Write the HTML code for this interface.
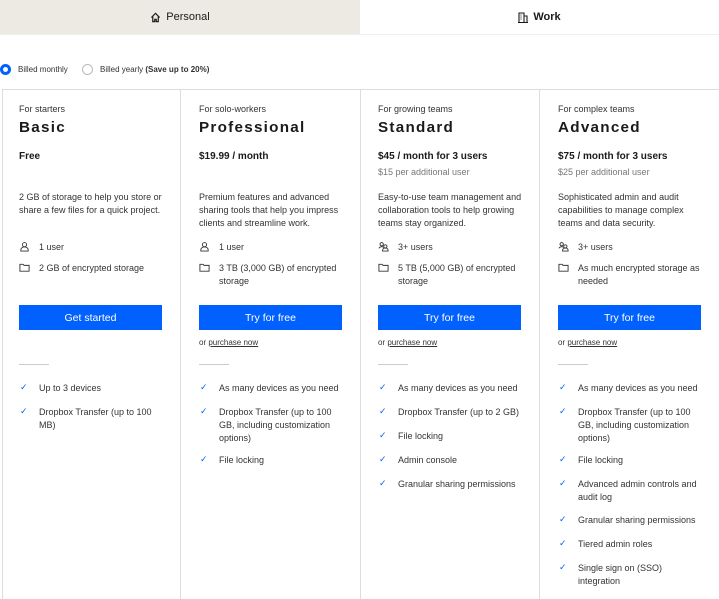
<!DOCTYPE html>
<html><head><meta charset="utf-8"><style>
*{margin:0;padding:0;box-sizing:border-box}
body{width:719px;height:590px;overflow:hidden;background:#fff;font-family:"Liberation Sans",sans-serif;color:#1e1919;position:relative}
.tab{position:absolute;top:0;height:34px;width:360px;display:flex;align-items:center;justify-content:center;font-size:11px;gap:5px}
.t1{left:0;background:#edeae3}
.t2{left:360px;background:#fff;font-weight:bold;width:359px}
.radio{position:absolute;top:64px;width:11px;height:11px;border-radius:50%}
.rl{position:absolute;top:65px;font-size:8px;color:#333}
.tbl{position:absolute;left:2px;top:89px;width:717px;height:510px;border-top:1px solid #ddd;border-left:1px solid #ddd}
.col{position:absolute;top:89px;height:510px;border-right:1px solid #ddd}
.a{position:absolute;font-size:9px;line-height:13px;color:#333}
.h{position:absolute;font-size:14.5px;letter-spacing:1.2px;color:#1e1919;font-weight:bold;transform:scaleX(1.05);transform-origin:left}
.p{position:absolute;font-size:10px;font-weight:bold}
.btn{position:absolute;width:143px;height:25px;background:#0061fe;color:#fff;font-size:10.5px;display:flex;align-items:center;justify-content:center}
.dv{position:absolute;width:30px;border-top:1px solid #ccc}
.ck{position:absolute;color:#0061fe;font-size:9px}
svg.i{position:absolute}
u{text-decoration:underline}
</style></head><body>
<div class="tab t1"><svg width="11" height="11" viewBox="0 0 12 12"><path d="M1.5 6L6 1.5 10.5 6M3 5v5.5h2.2V8h1.6v2.5H9V5" fill="none" stroke="#1e1919" stroke-width="1.3"/></svg>Personal</div>
<div class="tab t2"><svg width="10" height="11" viewBox="0 0 10 11"><path d="M1 10.5V1h5v9.5M6 4h3v6.5M0 10.5h10M2.5 3h1M2.5 5h1M2.5 7h1" fill="none" stroke="#1e1919" stroke-width="1.1"/></svg>Work</div>
<div style="position:absolute;left:0;right:0;top:34px;border-top:1px solid #eee"></div>
<div class="radio" style="left:0;border:3px solid #0061fe"></div>
<div class="rl" style="left:18px">Billed monthly</div>
<div class="radio" style="left:82px;border:1px solid #bbb"></div>
<div class="rl" style="left:100px">Billed yearly <b>(Save up to 20%)</b></div>
<div class="tbl"></div>
<div class="col" style="left:2px;width:179px"></div>
<div class="col" style="left:181px;width:180px"></div>
<div class="col" style="left:361px;width:179px"></div>

<svg width="0" height="0" style="position:absolute"><defs>
<symbol id="u" viewBox="0 0 12 12"><circle cx="6" cy="4" r="2.3" fill="none" stroke="#333" stroke-width="1"/><path d="M2 11v-1.5a4 3 0 0 1 8 0V11z" fill="none" stroke="#333" stroke-width="1"/></symbol>
<symbol id="us" viewBox="0 0 12 12"><circle cx="4" cy="3.5" r="1.8" fill="none" stroke="#333" stroke-width="1"/><path d="M1 8a3 2.5 0 0 1 5-1" fill="none" stroke="#333" stroke-width="1"/><circle cx="8" cy="6" r="1.8" fill="none" stroke="#333" stroke-width="1"/><path d="M5 11v-1a3 2.5 0 0 1 6 0v1z" fill="none" stroke="#333" stroke-width="1"/></symbol>
<symbol id="f" viewBox="0 0 12 12"><path d="M1 2.5h3.5l1 1.2H11V10H1z" fill="none" stroke="#333" stroke-width="1"/></symbol>
</defs></svg>

<!-- col1 -->
<div class="a" style="left:19px;top:103px">For starters</div>
<div class="h" style="left:19px;top:120px">Basic</div>
<div class="p" style="left:19px;top:151px">Free</div>
<div class="a" style="left:19px;top:191px;width:148px">2 GB of storage to help you store or share a few files for a quick project.</div>
<svg class="i" style="left:19px;top:241px" width="11" height="11"><use href="#u"/></svg><div class="a" style="left:39px;top:241px">1 user</div>
<svg class="i" style="left:19px;top:262px" width="11" height="11"><use href="#f"/></svg><div class="a" style="left:39px;top:262px">2 GB of encrypted storage</div>
<div class="btn" style="left:19px;top:305px">Get started</div>
<div class="dv" style="left:19px;top:364px"></div>
<div class="ck" style="left:20px;top:382px">✓</div><div class="a" style="left:39px;top:382px">Up to 3 devices</div>
<div class="ck" style="left:20px;top:406px">✓</div><div class="a" style="left:39px;top:406px;width:118px">Dropbox Transfer (up to 100 MB)</div>

<!-- col2 -->
<div class="a" style="left:199px;top:103px">For solo-workers</div>
<div class="h" style="left:199px;top:120px">Professional</div>
<div class="p" style="left:199px;top:151px">$19.99 / month</div>
<div class="a" style="left:199px;top:191px;width:146px">Premium features and advanced sharing tools that help you impress clients and streamline work.</div>
<svg class="i" style="left:199px;top:241px" width="11" height="11"><use href="#u"/></svg><div class="a" style="left:219px;top:241px">1 user</div>
<svg class="i" style="left:199px;top:262px" width="11" height="11"><use href="#f"/></svg><div class="a" style="left:219px;top:262px;width:125px">3 TB (3,000 GB) of encrypted storage</div>
<div class="btn" style="left:199px;top:305px">Try for free</div>
<div class="a" style="left:199px;top:336px;font-size:8px">or <u>purchase now</u></div>
<div class="dv" style="left:199px;top:364px"></div>
<div class="ck" style="left:200px;top:382px">✓</div><div class="a" style="left:219px;top:382px">As many devices as you need</div>
<div class="ck" style="left:200px;top:406px">✓</div><div class="a" style="left:219px;top:406px;width:122px">Dropbox Transfer (up to 100 GB, including customization options)</div>
<div class="ck" style="left:200px;top:454px">✓</div><div class="a" style="left:219px;top:454px">File locking</div>

<!-- col3 -->
<div class="a" style="left:378px;top:103px">For growing teams</div>
<div class="h" style="left:378px;top:120px">Standard</div>
<div class="p" style="left:378px;top:151px">$45 / month for 3 users</div>
<div class="a" style="left:378px;top:166px;color:#777">$15 per additional user</div>
<div class="a" style="left:378px;top:191px;width:148px">Easy-to-use team management and collaboration tools to help growing teams stay organized.</div>
<svg class="i" style="left:378px;top:241px" width="11" height="11"><use href="#us"/></svg><div class="a" style="left:398px;top:241px">3+ users</div>
<svg class="i" style="left:378px;top:262px" width="11" height="11"><use href="#f"/></svg><div class="a" style="left:398px;top:262px;width:125px">5 TB (5,000 GB) of encrypted storage</div>
<div class="btn" style="left:378px;top:305px">Try for free</div>
<div class="a" style="left:378px;top:336px;font-size:8px">or <u>purchase now</u></div>
<div class="dv" style="left:378px;top:364px"></div>
<div class="ck" style="left:379px;top:382px">✓</div><div class="a" style="left:398px;top:382px">As many devices as you need</div>
<div class="ck" style="left:379px;top:406px">✓</div><div class="a" style="left:398px;top:406px">Dropbox Transfer (up to 2 GB)</div>
<div class="ck" style="left:379px;top:430px">✓</div><div class="a" style="left:398px;top:430px">File locking</div>
<div class="ck" style="left:379px;top:454px">✓</div><div class="a" style="left:398px;top:454px">Admin console</div>
<div class="ck" style="left:379px;top:478px">✓</div><div class="a" style="left:398px;top:478px">Granular sharing permissions</div>

<!-- col4 -->
<div class="a" style="left:558px;top:103px">For complex teams</div>
<div class="h" style="left:558px;top:120px">Advanced</div>
<div class="p" style="left:558px;top:151px">$75 / month for 3 users</div>
<div class="a" style="left:558px;top:166px;color:#777">$25 per additional user</div>
<div class="a" style="left:558px;top:191px;width:138px">Sophisticated admin and audit capabilities to manage complex teams and data security.</div>
<svg class="i" style="left:558px;top:241px" width="11" height="11"><use href="#us"/></svg><div class="a" style="left:578px;top:241px">3+ users</div>
<svg class="i" style="left:558px;top:262px" width="11" height="11"><use href="#f"/></svg><div class="a" style="left:578px;top:262px;width:125px">As much encrypted storage as needed</div>
<div class="btn" style="left:558px;top:305px">Try for free</div>
<div class="a" style="left:558px;top:336px;font-size:8px">or <u>purchase now</u></div>
<div class="dv" style="left:558px;top:364px"></div>
<div class="ck" style="left:559px;top:382px">✓</div><div class="a" style="left:578px;top:382px">As many devices as you need</div>
<div class="ck" style="left:559px;top:406px">✓</div><div class="a" style="left:578px;top:406px;width:122px">Dropbox Transfer (up to 100 GB, including customization options)</div>
<div class="ck" style="left:559px;top:454px">✓</div><div class="a" style="left:578px;top:454px">File locking</div>
<div class="ck" style="left:559px;top:478px">✓</div><div class="a" style="left:578px;top:478px;width:122px">Advanced admin controls and audit log</div>
<div class="ck" style="left:559px;top:514px">✓</div><div class="a" style="left:578px;top:514px">Granular sharing permissions</div>
<div class="ck" style="left:559px;top:538px">✓</div><div class="a" style="left:578px;top:538px">Tiered admin roles</div>
<div class="ck" style="left:559px;top:562px">✓</div><div class="a" style="left:578px;top:562px;width:100px">Single sign on (SSO) integration</div>
</body></html>
